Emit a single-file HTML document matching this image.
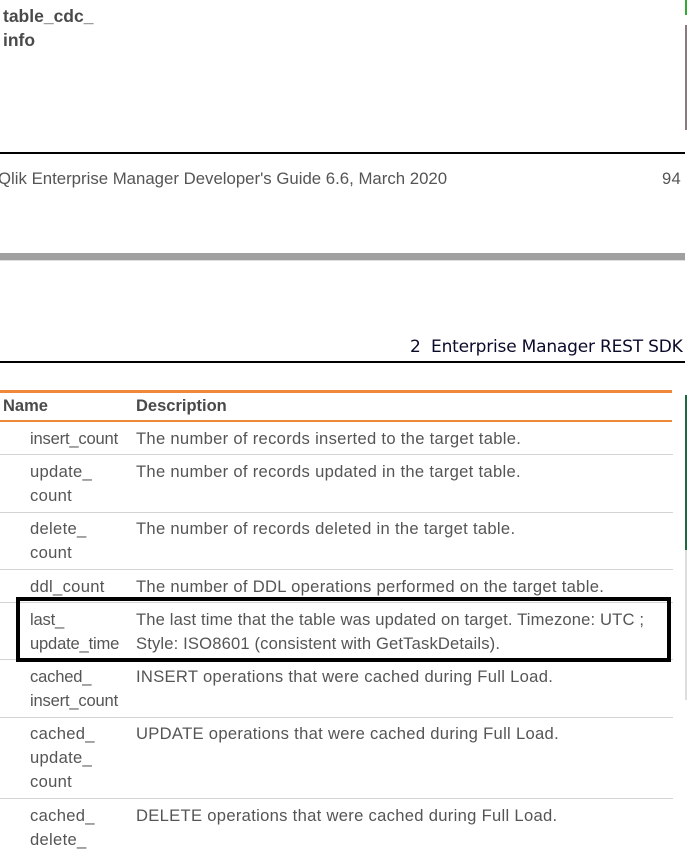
<!DOCTYPE html>
<html><head><meta charset="utf-8"><style>
*{margin:0;padding:0;box-sizing:border-box}
body{width:687px;height:848px;position:relative;overflow:hidden;background:#fff;font-family:"Liberation Sans",sans-serif;color:#555}
.a{position:absolute;white-space:nowrap}
.t{font-size:16.6px;letter-spacing:0.3px}
.hl{position:absolute;left:0;width:673px;height:1px;background:#d4d4d4}
</style></head><body>
<div class="a" style="left:3px;top:4px;font-size:17.5px;font-weight:bold;line-height:24px;color:#4a4a4a">table_cdc_<br>info</div>
<div class="a" style="left:0;top:152px;width:685px;height:2px;background:#000"></div>
<div class="a" style="left:-2px;top:169px;font-size:16.8px">Qlik Enterprise Manager Developer's Guide 6.6, March 2020</div>
<div class="a t" style="left:662px;top:169px">94</div>
<div class="a" style="left:0;top:253px;width:685px;height:7px;background:#a0a0a0"></div>
<div class="a" style="left:0;top:260px;width:685px;height:1px;background:#ddd"></div>
<div class="a" style="left:410px;top:337px;font-size:17px;color:#0a0a2a;font-family:'DejaVu Sans',sans-serif;letter-spacing:-0.2px">2&nbsp; Enterprise Manager REST SDK</div>
<div class="a" style="left:0;top:361px;width:685px;height:2px;background:#000"></div>
<div class="a" style="left:0;top:390px;width:672px;height:3px;background:#f0883a"></div>
<div class="a" style="left:0;top:420px;width:672px;height:2px;background:#f0883a"></div>
<div class="a" style="left:3px;top:397px;font-size:16.5px;font-weight:bold;color:#4a4a4a">Name</div>
<div class="a" style="left:136px;top:397px;font-size:16.5px;font-weight:bold;color:#4a4a4a">Description</div>
<div class="hl" style="top:454px"></div>
<div class="hl" style="top:512px"></div>
<div class="hl" style="top:569px"></div>
<div class="hl" style="top:602px"></div>
<div class="hl" style="top:659px"></div>
<div class="hl" style="top:717px"></div>
<div class="hl" style="top:798px"></div>
<div class="a t" style="left:30px;top:427px;line-height:24px;letter-spacing:-0.2px">insert_count</div>
<div class="a t" style="left:136px;top:427px;line-height:24px">The number of records inserted to the target table.</div>
<div class="a t" style="left:30px;top:460px;line-height:24px">update_<br>count</div>
<div class="a t" style="left:136px;top:460px;line-height:24px">The number of records updated in the target table.</div>
<div class="a t" style="left:30px;top:517px;line-height:24px">delete_<br>count</div>
<div class="a t" style="left:136px;top:517px;line-height:24px">The number of records deleted in the target table.</div>
<div class="a t" style="left:30px;top:575px;line-height:24px">ddl_count</div>
<div class="a t" style="left:136px;top:575px;line-height:24px">The number of DDL operations performed on the target table.</div>
<div class="a" style="left:16px;top:597px;width:655px;height:65px;border:4px solid #000"></div>
<div class="a t" style="left:30px;top:608px;line-height:24px;letter-spacing:-0.2px">last_<br>update_time</div>
<div class="a t" style="left:136px;top:608px;line-height:24px;letter-spacing:0.15px">The last time that the table was updated on target. Timezone: UTC ;<br>Style: ISO8601 (consistent with GetTaskDetails).</div>
<div class="a t" style="left:30px;top:665px;line-height:24px;letter-spacing:-0.2px">cached_<br>insert_count</div>
<div class="a t" style="left:136px;top:665px;line-height:24px">INSERT operations that were cached during Full Load.</div>
<div class="a t" style="left:30px;top:722px;line-height:24px">cached_<br>update_<br>count</div>
<div class="a t" style="left:136px;top:722px;line-height:24px">UPDATE operations that were cached during Full Load.</div>
<div class="a t" style="left:30px;top:804px;line-height:24px">cached_<br>delete_</div>
<div class="a t" style="left:136px;top:804px;line-height:24px">DELETE operations that were cached during Full Load.</div>
<div class="a" style="left:685px;top:0;width:2px;height:15px;background:#3a3"></div>
<div class="a" style="left:685px;top:25px;width:2px;height:105px;background:#8a7a80"></div>
<div class="a" style="left:685px;top:395px;width:2px;height:155px;background:#1a6a40"></div>
<div class="a" style="left:685px;top:550px;width:2px;height:150px;background:#ddd"></div>
</body></html>
